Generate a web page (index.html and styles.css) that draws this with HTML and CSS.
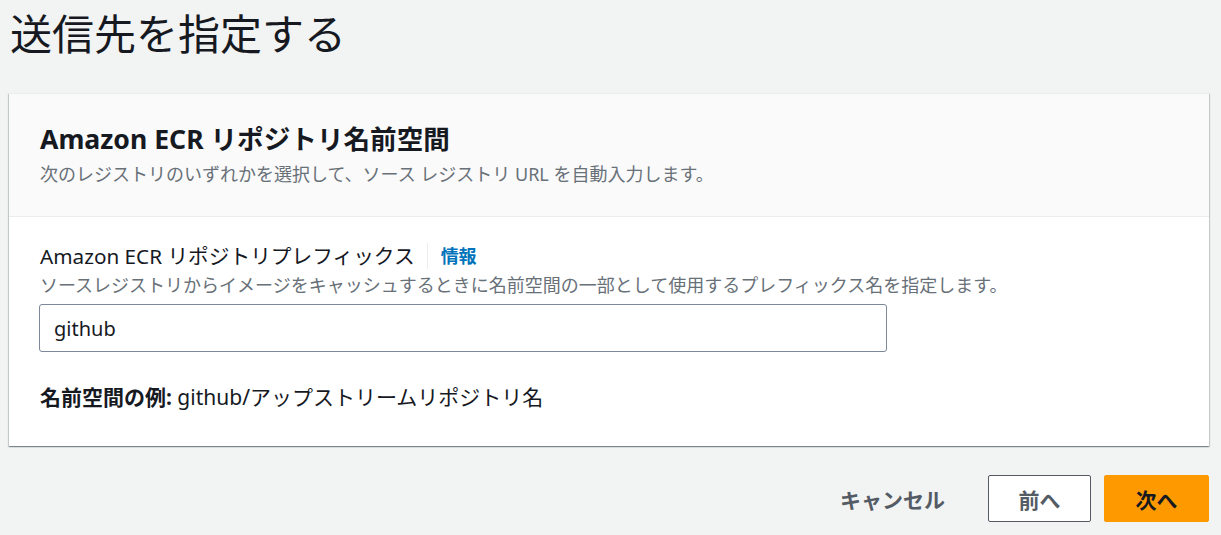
FILE: index.html
```html
<!DOCTYPE html>
<html lang="ja">
<head>
    <meta charset="UTF-8">
    <meta name="viewport" content="width=device-width, initial-scale=1.0">
    <title>送信先を指定する</title>
    <link rel="stylesheet" href="styles.css">
</head>
<body>

<!-- Page title -->
<h1 class="page-title">送信先を指定する</h1>

<!-- Namespace card -->
<div class="card">
  <div class="card-header">
    <h2>Amazon ECR リポジトリ名前空間</h2>
    <p class="card-desc">次のレジストリのいずれかを選択して、ソース レジストリ URL を自動入力します。</p>
  </div>
  <div class="card-body">
    <div class="field-label">
      <span>Amazon ECR リポジトリプレフィックス</span>
      <a class="info-link" href="#">情報</a>
    </div>
    <p class="field-desc">ソースレジストリからイメージをキャッシュするときに名前空間の一部として使用するプレフィックス名を指定します。</p>
    <input class="text-input" type="text" value="github">
    <p class="example"><b>名前空間の例:</b> github/アップストリームリポジトリ名</p>
  </div>
</div>

<!-- Actions -->
<div class="actions">
  <button class="btn btn-link">キャンセル</button>
  <button class="btn btn-normal">前へ</button>
  <button class="btn btn-primary">次へ</button>
</div>

</body>
</html>
```

FILE: styles.css
```css
html, body {
  margin: 0;
  background: #f2f3f3;
  font-family: 'Noto Sans', 'Noto Sans CJK JP', sans-serif;
  color: #16191f;
  -webkit-font-smoothing: antialiased;
}

body {
  padding: 0 12px 0 9px;
}

.page-title {
  margin: 0;
  padding: 8px 0 0 1px;
  height: 93px;
  box-sizing: border-box;
  font-size: 42px;
  font-weight: 400;
  line-height: 52px;
}

/* Card */
.card {
  background: #ffffff;
  border-top: 1px solid #eaeded;
  box-shadow:
    0 1px 1px 0 rgba(0, 28, 36, 0.3),
    1px 1px 1px 0 rgba(0, 28, 36, 0.15),
    -1px 1px 1px 0 rgba(0, 28, 36, 0.15);
}

.card-header {
  background: #fafafa;
  border-bottom: 1px solid #eaeded;
  padding: 28px 31px 0 31px;
  height: 123px;
  box-sizing: border-box;
}

.card-header h2 {
  margin: 0;
  font-size: 26.6px;
  font-weight: 700;
  line-height: 34px;
}

.card-desc {
  margin: 6px 0 0 0;
  font-size: 18px;
  line-height: 24px;
  color: #687078;
}

.card-body {
  padding: 26px 31px 36px 30px;
}

.field-label {
  display: flex;
  align-items: center;
  font-size: 20.7px;
  line-height: 26px;
  padding-left: 1px;
}

.info-link {
  margin-left: 12px;
  padding-left: 13px;
  border-left: 1px solid #eaeded;
  color: #0073bb;
  font-weight: 700;
  text-decoration: none;
  font-size: 18px;
}

.field-desc {
  margin: 4px 0 0 1px;
  font-size: 18px;
  line-height: 24px;
  color: #687078;
}

.text-input {
  display: block;
  margin-top: 7px;
  width: 848px;
  height: 48px;
  box-sizing: border-box;
  border: 1px solid #7d8998;
  border-radius: 3px;
  padding: 0 14px;
  font-family: inherit;
  font-size: 20px;
  color: #16191f;
  background: #ffffff;
}

.example {
  margin: 32px 0 0 1px;
  font-size: 21px;
  line-height: 26px;
}

/* Actions */
.actions {
  display: flex;
  justify-content: flex-end;
  align-items: center;
  gap: 13px;
  margin-top: 29px;
}

.btn {
  height: 47px;
  box-sizing: border-box;
  border-radius: 2px;
  font-family: inherit;
  font-size: 21px;
  font-weight: 700;
  cursor: pointer;
}

.btn-link {
  background: none;
  border: none;
  color: #545b64;
  padding: 0 30px;
}

.btn-normal {
  width: 103px;
  background: #ffffff;
  border: 1px solid #545b64;
  color: #545b64;
}

.btn-primary {
  width: 105px;
  background: #ff9900;
  border: 1px solid #ff9900;
  color: #16191f;
}
```
